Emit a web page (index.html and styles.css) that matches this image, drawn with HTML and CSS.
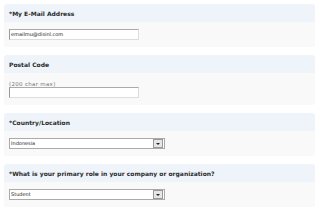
FILE: index.html
```html
<!DOCTYPE html>
<html lang="en">
<head>
  <meta charset="UTF-8" />
  <meta name="viewport" content="width=device-width, initial-scale=1.0" />
  <title>Registration</title>
  <link rel="stylesheet" href="styles.css">
</head>
<body>
  <div class="form">
    <div class="field">
      <div class="field-head">*My E-Mail Address</div>
      <div class="field-body">
        <div class="text-input">emailmu@disinl.com</div>
      </div>
    </div>

    <div class="field">
      <div class="field-head">Postal Code</div>
      <div class="field-body">
        <div class="hint">(200 char max)</div>
        <div class="text-input"></div>
      </div>
    </div>

    <div class="field">
      <div class="field-head">*Country/Location</div>
      <div class="field-body">
        <div class="select">
          <span class="select-value">Indonesia</span>
          <span class="select-btn"><span class="arrow"></span></span>
        </div>
      </div>
    </div>

    <div class="field">
      <div class="field-head">*What is your primary role in your company or organization?</div>
      <div class="field-body">
        <div class="select">
          <span class="select-value">Student</span>
          <span class="select-btn"><span class="arrow"></span></span>
        </div>
      </div>
    </div>
  </div>
</body>
</html>
```

FILE: styles.css
```css
body {
  margin: 0;
  background-color: #fff;
  font-family: "DejaVu Sans", Verdana, sans-serif;
  color: #333;
}

.form {
  display: flex;
  flex-direction: column;
  gap: 8px;
  padding: 4px 5px 0 4px;
}

.field {
  border-radius: 3px;
  overflow: hidden;
  background-color: #f9f9f9;
}

.field-head {
  background-color: #eef4fa;
  height: 18px;
  line-height: 19px;
  padding-left: 5px;
  font-size: 6px;
  font-weight: bold;
  color: #2b2b2b;
}

.field-body {
  padding: 7px 5px 7px 5px;
}

.hint {
  font-size: 5.5px;
  letter-spacing: 0.3px;
  color: #777;
  line-height: 6px;
  margin-top: 1px;
}

.text-input {
  width: 127px;
  height: 9px;
  background-color: #fff;
  border: 1px solid #ddd;
  border-top: 1px solid #aaa;
  border-left: 1px solid #999;
  font-size: 5px;
  line-height: 9px;
  padding-left: 1px;
  color: #222;
}

.select {
  display: flex;
  align-items: center;
  width: 152px;
  height: 9px;
  background-color: #fff;
  border: 1px solid #aaa;
  padding: 0 1px 0 1px;
}

.select-value {
  flex: 1;
  font-size: 5px;
  line-height: 9px;
  color: #222;
}

.select-btn {
  display: flex;
  align-items: center;
  justify-content: center;
  width: 8px;
  height: 7px;
  background-color: #e6e6e6;
  border: 1px solid #999;
}

.arrow {
  width: 0;
  height: 0;
  border-left: 2px solid transparent;
  border-right: 2px solid transparent;
  border-top: 2px solid #222;
}
```
